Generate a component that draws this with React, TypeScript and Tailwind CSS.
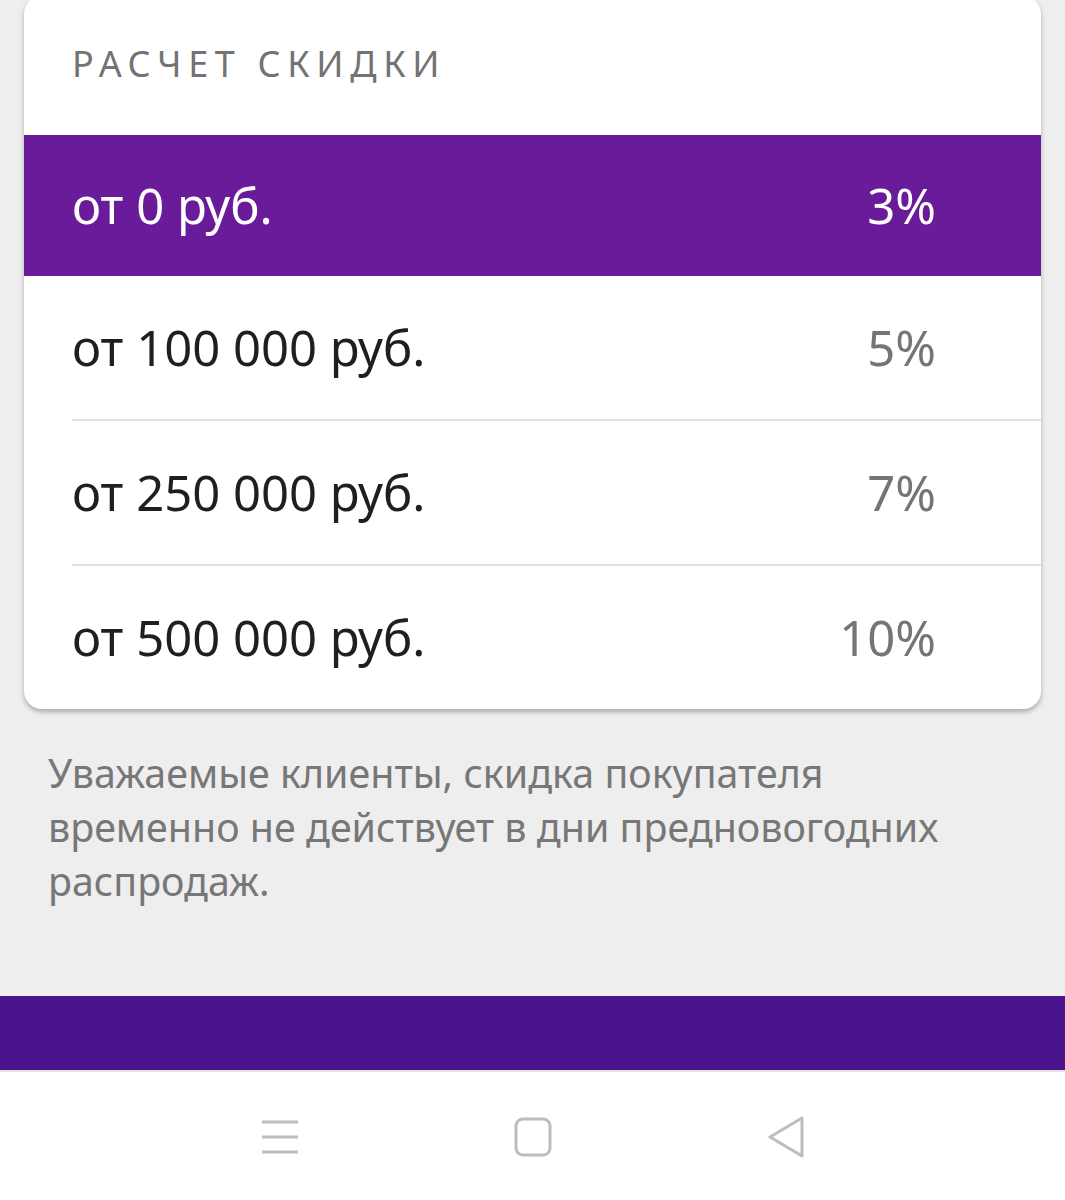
const tiers = [
  { label: 'от 0 руб.', pct: '3%' },
  { label: 'от 100 000 руб.', pct: '5%' },
  { label: 'от 250 000 руб.', pct: '7%' },
  { label: 'от 500 000 руб.', pct: '10%' },
];

function NavBar() {
  return (
    <div className="h-[130px] bg-white border-t-2 border-[#e3e3e3] flex items-center justify-center">
      <div className="flex items-center gap-[215px] mt-[2px]">
        {/* recent apps */}
        <svg width="38" height="36" viewBox="0 0 38 36" fill="none" stroke="#bdbdbd" strokeWidth="3">
          <path d="M1 3h36M1 18h36M1 33h36" />
        </svg>
        {/* home */}
        <svg width="38" height="40" viewBox="0 0 38 40" fill="none" stroke="#bdbdbd" strokeWidth="3">
          <rect x="2" y="2" width="34" height="36" rx="7" />
        </svg>
        {/* back */}
        <svg width="38" height="42" viewBox="0 0 38 42" fill="none" stroke="#bdbdbd" strokeWidth="3" strokeLinejoin="round">
          <path d="M35 2 L3 21 L35 40 Z" />
        </svg>
      </div>
    </div>
  );
}

export default function App() {
  const rows: JSX.Element[] = [];
  tiers.forEach((t, i) => {
    const active = i === 0;
    if (i > 1) rows.push(<div key={'d' + i} className="ml-[48px] h-[2px] bg-[#e0e0e0]" />);
    rows.push(
      <div
        key={t.label}
        className={
          active
            ? 'h-[141px] bg-[#6a1b9a] flex items-center justify-between pl-[48px] pr-[105px]'
            : 'h-[143px] flex items-center justify-between pl-[48px] pr-[105px]'
        }
      >
        <span className={active ? 'text-[49px] text-white' : 'text-[49px] text-[#1f1f1f]'}>{t.label}</span>
        <span className={active ? 'text-[49px] text-white' : 'text-[49px] text-[#757575]'}>{t.pct}</span>
      </div>
    );
  });

  return (
    <div
      className="w-[1065px] h-[1200px] overflow-hidden bg-[#eeeeee] flex flex-col"
      style={{ fontFamily: '"Noto Sans", Roboto, sans-serif' }}
    >
      <div className="px-[24px] -mt-[4px]">
        <div className="bg-white rounded-[18px] overflow-hidden shadow-[0_3px_5px_rgba(0,0,0,0.28)]">
          <div className="h-[139px] flex items-center pl-[48px] pb-[4px]">
            <span className="text-[36px] tracking-[0.185em] text-[#737373]">РАСЧЕТ СКИДКИ</span>
          </div>
          {rows}
        </div>
      </div>

      <p className="pl-[48px] pr-[77px] pt-[37px] text-[39.4px] leading-[54px] text-[#777777]">
        Уважаемые клиенты, скидка покупателя временно не действует в дни предновогодних распродаж.
      </p>

      <div className="flex-1" />
      <div className="h-[74px] bg-[#4a148c]" />
      <NavBar />
    </div>
  );
}
